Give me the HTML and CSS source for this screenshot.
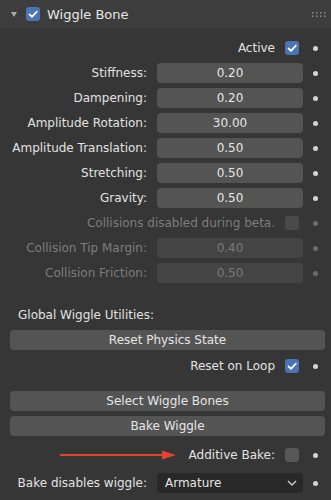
FILE: index.html
```html
<!DOCTYPE html>
<html>
<head>
<meta charset="utf-8">
<link rel="stylesheet" href="styles.css">
</head>
<body>
<div class="panel">
  <div class="header">
    <span class="tri"></span>
    <span class="cb on"><svg viewBox="0 0 14 14" width="14" height="14"><path d="M3.5 7.3 L6 9.8 L10.8 4.6" fill="none" stroke="#fff" stroke-width="1.7" stroke-linecap="round" stroke-linejoin="round"/></svg></span>
    <span class="title">Wiggle Bone</span>
    <svg class="grip" viewBox="0 0 14 6" width="14" height="6">
      <g fill="#8c8c8c">
        <rect x="0" y="0" width="1.5" height="1.5"/><rect x="4" y="0" width="1.5" height="1.5"/><rect x="8" y="0" width="1.5" height="1.5"/><rect x="12" y="0" width="1.5" height="1.5"/>
        <rect x="0" y="3.5" width="1.5" height="1.5"/><rect x="4" y="3.5" width="1.5" height="1.5"/><rect x="8" y="3.5" width="1.5" height="1.5"/><rect x="12" y="3.5" width="1.5" height="1.5"/>
      </g>
    </svg>
  </div>
  <div class="body">
    <div class="row check">
      <span class="lbl">Active</span>
      <span class="cb on"><svg viewBox="0 0 14 14" width="14" height="14"><path d="M3.5 7.3 L6 9.8 L10.8 4.6" fill="none" stroke="#fff" stroke-width="1.7" stroke-linecap="round" stroke-linejoin="round"/></svg></span>
      <span class="dot"></span>
    </div>
    <div class="row prop"><span class="lbl">Stiffness:</span><span class="field">0.20</span><span class="dot"></span></div>
    <div class="row prop"><span class="lbl">Dampening:</span><span class="field">0.20</span><span class="dot"></span></div>
    <div class="row prop"><span class="lbl">Amplitude Rotation:</span><span class="field">30.00</span><span class="dot"></span></div>
    <div class="row prop"><span class="lbl">Amplitude Translation:</span><span class="field">0.50</span><span class="dot"></span></div>
    <div class="row prop"><span class="lbl">Stretching:</span><span class="field">0.50</span><span class="dot"></span></div>
    <div class="row prop"><span class="lbl">Gravity:</span><span class="field">0.50</span><span class="dot"></span></div>
    <div class="row check disabled">
      <span class="lbl">Collisions disabled during beta.</span>
      <span class="cb off"></span>
      <span class="dot"></span>
    </div>
    <div class="row prop disabled"><span class="lbl">Collision Tip Margin:</span><span class="field">0.40</span><span class="dot"></span></div>
    <div class="row prop disabled"><span class="lbl">Collision Friction:</span><span class="field">0.50</span><span class="dot"></span></div>

    <div class="row section">Global Wiggle Utilities:</div>
    <div class="row full r-reset"><span class="button">Reset Physics State</span></div>
    <div class="row check r-loop">
      <span class="lbl">Reset on Loop</span>
      <span class="cb on"><svg viewBox="0 0 14 14" width="14" height="14"><path d="M3.5 7.3 L6 9.8 L10.8 4.6" fill="none" stroke="#fff" stroke-width="1.7" stroke-linecap="round" stroke-linejoin="round"/></svg></span>
      <span class="dot"></span>
    </div>
    <div class="row full r-select"><span class="button">Select Wiggle Bones</span></div>
    <div class="row full"><span class="button">Bake Wiggle</span></div>
    <div class="row check r-additive">
      <svg class="arrow" viewBox="0 0 116 10" width="116" height="10">
        <line x1="0" y1="5" x2="104" y2="5" stroke="#e4432b" stroke-width="2"/>
        <path d="M102 0.5 L116 5 L102 9.5 Z" fill="#e4432b"/>
      </svg>
      <span class="lbl">Additive Bake:</span>
      <span class="cb off"></span>
      <span class="dot"></span>
    </div>
    <div class="row prop r-bake">
      <span class="lbl">Bake disables wiggle:</span>
      <span class="field select"><span>Armature</span><svg viewBox="0 0 10 6" width="10" height="6"><path d="M1 1 L5 5 L9 1" fill="none" stroke="#d0d0d0" stroke-width="1.4"/></svg></span>
      <span class="dot"></span>
    </div>
  </div>
</div>
</body>
</html>
```
FILE: styles.css
```css
html, body {
  margin: 0;
  padding: 0;
  background: #363636;
}
body {
  width: 331px;
  height: 500px;
  overflow: hidden;
  font-family: "DejaVu Sans", "Liberation Sans", sans-serif;
  font-size: 12px;
  color: #e2e2e2;
}
.panel {
  display: flex;
  flex-direction: column;
}
.header {
  height: 28px;
  background: #3d3d3d;
  display: flex;
  align-items: center;
  padding-left: 11px;
  padding-right: 5px;
  box-sizing: border-box;
}
.tri {
  width: 0;
  height: 0;
  border-left: 3.5px solid transparent;
  border-right: 3.5px solid transparent;
  border-top: 5px solid #a8a8a8;
  margin-right: 9px;
}
.title {
  font-size: 13px;
  color: #e6e6e6;
  margin-left: 7px;
  flex: 1;
}
.grip {
  margin-right: 0;
  margin-top: 1px;
}
.cb {
  width: 14px;
  height: 14px;
  border-radius: 3px;
  display: inline-flex;
  flex: none;
}
.cb.on { background: #4a74b4; }
.cb.off { background: #585858; }
.body {
  display: flex;
  flex-direction: column;
  gap: 5px;
  padding-top: 10px;
}
.row {
  height: 20px;
  line-height: 20px;
}
.prop {
  display: grid;
  grid-template-columns: 147px 146px 1fr;
  column-gap: 10px;
  align-items: center;
}
.prop .lbl {
  text-align: right;
  white-space: nowrap;
}
.field {
  height: 20px;
  background: #545454;
  border-radius: 4px;
  text-align: center;
  color: #e6e6e6;
}
.dot {
  width: 5px;
  height: 5px;
  border-radius: 50%;
  background: #d4d4d4;
  flex: none;
}
.check {
  display: flex;
  justify-content: flex-end;
  align-items: center;
  padding-right: 13px;
}
.check .lbl {
  margin-right: 10px;
}
.check .cb {
  margin-right: 14px;
}
.disabled .lbl { color: #7d7d7d; }
.disabled .field { background: #444444; color: #7a7a7a; }
.disabled .dot { background: #6c6c6c; }
.disabled .cb.off { background: #4a4a4a; }
.section {
  margin-top: 17px;
  padding-left: 18px;
}
.full {
  padding: 0 6px 0 10px;
  display: flex;
}
.button {
  flex: 1;
  height: 20px;
  background: #545454;
  border-radius: 4px;
  text-align: center;
  color: #e6e6e6;
}
.r-loop { margin-top: 1px; }
.r-select { margin-top: 10px; }
.r-additive { margin-top: 4px; }
.arrow {
  margin-right: 13px;
}
.r-bake { margin-top: 3px; }
.select {
  background: #282828;
  display: flex;
  align-items: center;
  justify-content: space-between;
  padding: 0 6px 0 8px;
  text-align: left;
}
```
